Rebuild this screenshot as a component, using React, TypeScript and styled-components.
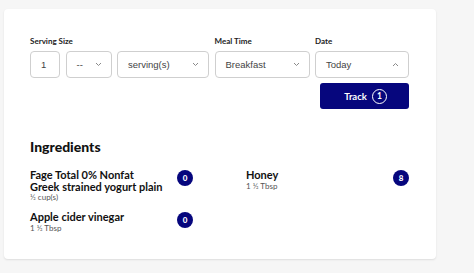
import React from "react";
import styled, { createGlobalStyle } from "styled-components";

const GlobalStyle = createGlobalStyle`
  html, body { margin: 0; padding: 0; }
  body {
    background: #f6f6f6;
    font-family: "Liberation Sans", Arial, sans-serif;
    width: 474px;
    height: 273px;
    overflow: hidden;
  }
`;

const Page = styled.div`
  padding: 9px 0 0 4px;
`;

const Card = styled.div`
  width: 432px;
  height: 250px;
  box-sizing: border-box;
  background: #fff;
  border-radius: 4px;
  box-shadow: 0 1px 2px rgba(0, 0, 0, 0.1);
  padding: 27px 27px 0 26px;
`;

const FormRow = styled.div`
  display: flex;
  gap: 5.5px;
`;

const Field = styled.div`
  display: flex;
  flex-direction: column;
  gap: 5px;
`;

const Label = styled.div`
  font-family: Lato, "Noto Sans", sans-serif;
  font-weight: 700;
  font-size: 8px;
  line-height: 10px;
  color: #222;
`;

const Controls = styled.div`
  display: flex;
  gap: 5.5px;
`;

const Box = styled.div<{ $w: number }>`
  width: ${(p) => p.$w}px;
  height: 27px;
  box-sizing: border-box;
  border: 1px solid #cfcfcf;
  border-radius: 4px;
  display: flex;
  align-items: center;
  justify-content: space-between;
  padding: 0 9px 0 10px;
  font-size: 9.5px;
  color: #444;
`;

const Chevron = ({ up }: { up?: boolean }) => (
  <svg width="7" height="5" viewBox="0 0 7 5">
    <path
      d={up ? "M1 4 L3.5 1.5 L6 4" : "M1 1 L3.5 3.5 L6 1"}
      fill="none"
      stroke="#8a8a8a"
      strokeWidth="1"
    />
  </svg>
);

const ButtonRow = styled.div`
  display: flex;
  justify-content: flex-end;
  margin-top: 5px;
`;

const TrackButton = styled.button`
  width: 89px;
  height: 26px;
  border: none;
  border-radius: 3px;
  background: #06067d;
  color: #fff;
  font-family: Lato, "Noto Sans", sans-serif;
  font-weight: 700;
  font-size: 9.5px;
  display: flex;
  align-items: center;
  justify-content: center;
  gap: 5px;
  padding: 0 0 0 2px;
`;

const CountRing = styled.span`
  width: 15px;
  height: 15px;
  box-sizing: border-box;
  border: 1px solid #fff;
  border-radius: 50%;
  display: flex;
  align-items: center;
  justify-content: center;
  font-size: 8.5px;
`;

const Heading = styled.h2`
  margin: 30px 0 0 0;
  font-family: Lato, "Noto Sans", sans-serif;
  font-weight: 900;
  font-size: 14px;
  line-height: 16px;
  color: #111;
`;

const Grid = styled.div`
  display: grid;
  grid-template-columns: 163px 163px;
  justify-content: space-between;
  row-gap: 8px;
  margin-top: 14px;
`;

const Item = styled.div`
  display: flex;
  justify-content: space-between;
  align-items: flex-start;
`;

const ItemText = styled.div`
  display: flex;
  flex-direction: column;
`;

const Name = styled.div`
  font-family: Lato, "Noto Sans", sans-serif;
  font-weight: 700;
  font-size: 11px;
  line-height: 11.5px;
  color: #111;
`;

const Qty = styled.div`
  font-family: Lato, "Noto Sans", sans-serif;
  font-size: 8px;
  line-height: 11px;
  color: #555;
`;

const Badge = styled.span`
  width: 16px;
  height: 16px;
  border-radius: 50%;
  background: #06067d;
  color: #fff;
  font-family: Lato, "Noto Sans", sans-serif;
  font-weight: 900;
  font-size: 8px;
  display: flex;
  align-items: center;
  justify-content: center;
  flex-shrink: 0;
  margin-top: 1px;
`;

const ingredients = [
  { name: ["Fage Total 0% Nonfat", "Greek strained yogurt plain"], qty: "½ cup(s)", count: 0 },
  { name: ["Honey"], qty: "1 ½ Tbsp", count: 8 },
  { name: ["Apple cider vinegar"], qty: "1 ½ Tbsp", count: 0 },
];

export default function App() {
  return (
    <>
      <GlobalStyle />
      <Page>
        <Card>
          <FormRow>
            <Field>
              <Label>Serving Size</Label>
              <Controls>
                <Box $w={30}>1</Box>
                <Box $w={46}>
                  -- <Chevron />
                </Box>
                <Box $w={92}>
                  serving(s) <Chevron />
                </Box>
              </Controls>
            </Field>
            <Field>
              <Label>Meal Time</Label>
              <Box $w={95}>
                Breakfast <Chevron />
              </Box>
            </Field>
            <Field>
              <Label>Date</Label>
              <Box $w={94}>
                Today <Chevron up />
              </Box>
            </Field>
          </FormRow>
          <ButtonRow>
            <TrackButton>
              Track <CountRing>1</CountRing>
            </TrackButton>
          </ButtonRow>
          <Heading>Ingredients</Heading>
          <Grid>
            {ingredients.map((it, i) => (
              <Item key={i}>
                <ItemText>
                  {it.name.map((n) => (
                    <Name key={n}>{n}</Name>
                  ))}
                  <Qty>{it.qty}</Qty>
                </ItemText>
                <Badge>{it.count}</Badge>
              </Item>
            ))}
          </Grid>
        </Card>
      </Page>
    </>
  );
}
